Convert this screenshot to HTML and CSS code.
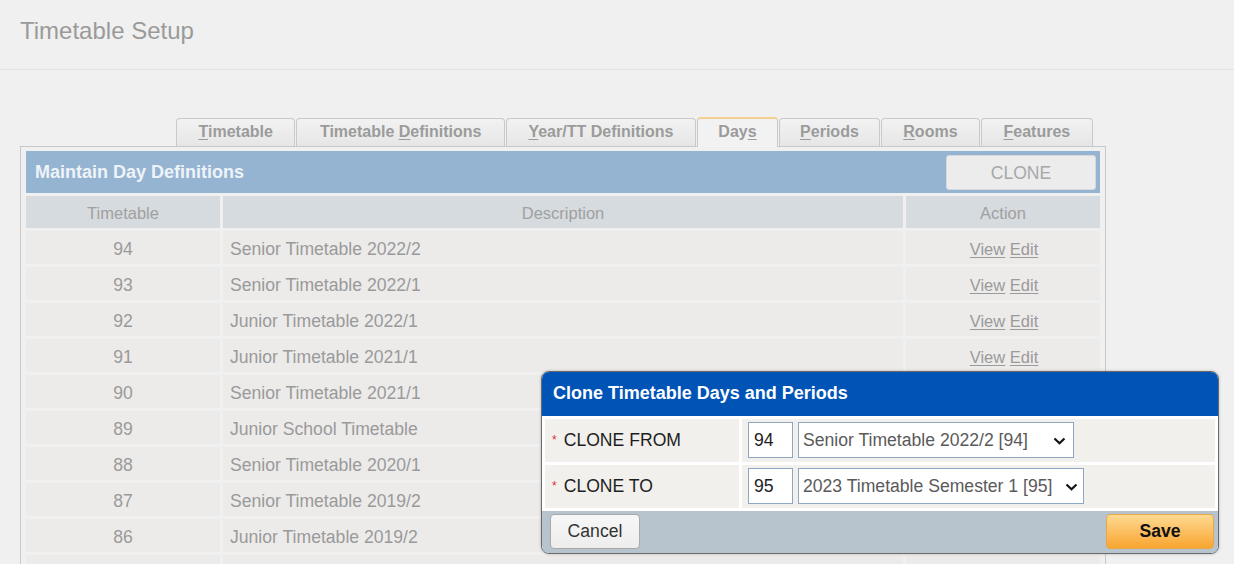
FILE: index.html
```html
<!DOCTYPE html>
<html>
<head>
<meta charset="utf-8">
<title>Timetable Setup</title>
<link rel="stylesheet" href="styles.css">
</head>
<body>
<header class="page-header">
  <h1 class="page-title">Timetable Setup</h1>
</header>
<main class="content">
  <nav class="tabs">
    <div class="tab"><u>T</u>imetable</div>
    <div class="tab tab-wide">Timetable <u>D</u>efinitions</div>
    <div class="tab"><u>Y</u>ear/TT Definitions</div>
    <div class="tab tab-active">Day<u>s</u></div>
    <div class="tab tab-narrow"><u>P</u>eriods</div>
    <div class="tab"><u>R</u>ooms</div>
    <div class="tab"><u>F</u>eatures</div>
  </nav>
  <section class="panel">
    <div class="panel-head">
      <span class="panel-title">Maintain Day Definitions</span>
      <button class="btn-clone">CLONE</button>
    </div>
    <table class="grid">
      <thead>
        <tr><th class="c-id">Timetable</th><th class="c-desc">Description</th><th class="c-act">Action</th></tr>
      </thead>
      <tbody>
        <tr><td class="c-id">94</td><td class="c-desc">Senior Timetable 2022/2</td><td class="c-act"><a>View</a> <a>Edit</a></td></tr>
        <tr><td class="c-id">93</td><td class="c-desc">Senior Timetable 2022/1</td><td class="c-act"><a>View</a> <a>Edit</a></td></tr>
        <tr><td class="c-id">92</td><td class="c-desc">Junior Timetable 2022/1</td><td class="c-act"><a>View</a> <a>Edit</a></td></tr>
        <tr><td class="c-id">91</td><td class="c-desc">Junior Timetable 2021/1</td><td class="c-act"><a>View</a> <a>Edit</a></td></tr>
        <tr><td class="c-id">90</td><td class="c-desc">Senior Timetable 2021/1</td><td class="c-act"><a>View</a> <a>Edit</a></td></tr>
        <tr><td class="c-id">89</td><td class="c-desc">Junior School Timetable</td><td class="c-act"><a>View</a> <a>Edit</a></td></tr>
        <tr><td class="c-id">88</td><td class="c-desc">Senior Timetable 2020/1</td><td class="c-act"><a>View</a> <a>Edit</a></td></tr>
        <tr><td class="c-id">87</td><td class="c-desc">Senior Timetable 2019/2</td><td class="c-act"><a>View</a> <a>Edit</a></td></tr>
        <tr><td class="c-id">86</td><td class="c-desc">Junior Timetable 2019/2</td><td class="c-act"><a>View</a> <a>Edit</a></td></tr>
        <tr><td class="c-id">85</td><td class="c-desc">Senior Timetable 2019/1</td><td class="c-act"><a>View</a> <a>Edit</a></td></tr>
      </tbody>
    </table>
  </section>
</main>

<div class="modal">
  <div class="modal-head">Clone Timetable Days and Periods</div>
  <div class="modal-body">
    <div class="m-row">
      <div class="m-label"><span class="req">*</span><span>CLONE FROM</span></div>
      <div class="m-value">
        <div class="num-input">94</div>
        <div class="fake-select sel-from"><span>Senior Timetable 2022/2 [94]</span>
          <svg class="chev" width="13" height="8" viewBox="0 0 13 8"><path d="M1.5 1.5 L6.5 6.2 L11.5 1.5" fill="none" stroke="#111" stroke-width="2.2"/></svg>
        </div>
      </div>
    </div>
    <div class="m-row">
      <div class="m-label"><span class="req">*</span><span>CLONE TO</span></div>
      <div class="m-value">
        <div class="num-input">95</div>
        <div class="fake-select sel-to"><span>2023 Timetable Semester 1 [95]</span>
          <svg class="chev" width="13" height="8" viewBox="0 0 13 8"><path d="M1.5 1.5 L6.5 6.2 L11.5 1.5" fill="none" stroke="#111" stroke-width="2.2"/></svg>
        </div>
      </div>
    </div>
  </div>
  <div class="modal-foot">
    <button class="btn-cancel">Cancel</button>
    <button class="btn-save">Save</button>
  </div>
</div>
</body>
</html>
```

FILE: styles.css
```css
* { box-sizing: border-box; }

html, body {
  margin: 0;
  padding: 0;
}

body {
  background: #f0f0f0;
  font-family: "Liberation Sans", Arial, sans-serif;
  color: #999;
  width: 1234px;
  height: 564px;
  overflow: hidden;
  position: relative;
}

.page-header {
  height: 70px;
  border-bottom: 1px solid #e3e3e3;
  padding: 16px 0 0 20px;
}

.page-title {
  margin: 0;
  font-size: 24px;
  font-weight: normal;
  color: #9a9a9a;
  line-height: 30px;
}

.content {
  padding: 48px 0 0 20px;
}

.tabs {
  display: flex;
  gap: 1px;
  margin-left: 156px;
  height: 29px;
  position: relative;
  z-index: 1;
}

.tab {
  height: 28px;
  padding: 0 21.5px;
  border: 1px solid #c9c9c9;
  border-bottom: none;
  border-radius: 4px 4px 0 0;
  background: linear-gradient(#f2f2f2, #e6e6e6);
  font-size: 16px;
  font-weight: bold;
  color: #9b9b9b;
  line-height: 25px;
  white-space: nowrap;
}

.tab-wide { padding: 0 22.5px; }
.tab-narrow { padding: 0 20px; }

.tab u {
  text-decoration-thickness: 1px;
  text-underline-offset: 2px;
}

.tab-active {
  height: 30px;
  margin-top: -1px;
  padding: 0 20.5px;
  border-top: 2px solid #f3cf93;
  background: #f2f2f2;
  line-height: 26px;
}

.panel {
  width: 1086px;
  margin-top: -1px;
  border: 1px solid #c8c8c8;
  padding: 4px 5px 0;
  height: 420px;
}

.panel-head {
  height: 42px;
  background: #95b4d2;
  display: flex;
  align-items: center;
  justify-content: space-between;
  padding: 1px 4px 0 9px;
}

.panel-title {
  color: #eef3f8;
  font-size: 18px;
  font-weight: bold;
}

.btn-clone {
  width: 150px;
  height: 35px;
  border: 1px solid #d6d9dc;
  border-radius: 3px;
  background: #ececec;
  color: #a8a8a8;
  font-family: "Liberation Sans", Arial, sans-serif;
  font-size: 17.6px;
  padding: 1px 0 0;
}

.grid {
  border-collapse: separate;
  border-spacing: 3px;
  width: calc(100% + 6px);
  margin: 0 -3px;
  table-layout: fixed;
}

.grid th {
  height: 32px;
  background: #d6dbdf;
  font-weight: normal;
  font-size: 16.5px;
  color: #a0a0a0;
  padding: 2px 0 0;
}

.grid td {
  height: 33px;
  background: #ecebea;
  font-size: 17.6px;
  color: #9a9a9a;
  padding: 3px 0 0;
}

.c-id { width: 194px; text-align: center; }
.c-act { width: 194px; text-align: center; }
.grid td.c-desc { padding-left: 7px; }
.grid th.c-desc { text-align: center; }

.grid td.c-act { font-size: 16.5px; padding-left: 2px; }
.grid td.c-act a {
  color: #9a9a9a;
  text-decoration: underline;
  text-underline-offset: 2px;
}

/* modal dialog */
.modal {
  position: absolute;
  left: 541px;
  top: 371px;
  width: 678px;
  height: 183px;
  background: #fff;
  border: 1px solid #6a6a6a;
  border-radius: 8px;
  overflow: hidden;
  box-shadow: 0 0 3px rgba(0,0,0,0.25);
  color: #222;
}

.modal-head {
  height: 44px;
  background: #0054b6;
  color: #fff;
  font-size: 18px;
  font-weight: bold;
  padding: 0 0 0 11px;
  line-height: 43px;
}

.modal-body {
  display: flex;
  flex-direction: column;
  gap: 3.5px;
  padding: 3px 3px 3px;
}

.m-row {
  display: flex;
  gap: 3px;
  height: 42.5px;
}

.m-label {
  width: 194px;
  background: #f1f0ed;
  font-size: 17.6px;
  padding-left: 7px;
  display: flex;
  align-items: center;
  color: #1e1e1e;
}

.req {
  color: #e03030;
  font-size: 12px;
  margin-right: 7px;
  align-self: flex-start;
  margin-top: 14px;
}

.m-value {
  flex: 1;
  background: #f1f0ed;
  display: flex;
  align-items: center;
  padding-left: 6px;
  gap: 5px;
}

.num-input {
  width: 45px;
  height: 36px;
  background: #fff;
  border: 1px solid #8ea8c3;
  font-size: 17.6px;
  color: #222;
  padding-left: 5px;
  line-height: 34px;
}

.fake-select {
  height: 36px;
  background: #fff;
  border: 1px solid #8ea8c3;
  font-size: 17.6px;
  color: #5a5a5a;
  padding-left: 4px;
  display: flex;
  align-items: center;
  justify-content: space-between;
  white-space: nowrap;
}

.sel-from { width: 276px; padding-right: 7px; }
.sel-to { width: 286px; padding-right: 5px; }

.chev { flex: none; margin-top: 1px; }

.modal-foot {
  height: 43px;
  background: #b7c4ce;
  display: flex;
  align-items: center;
  justify-content: space-between;
  padding: 0 4px 1px 8px;
}

.btn-cancel {
  width: 90px;
  height: 35px;
  border: 1px solid #a9a9a9;
  border-radius: 4px;
  background: linear-gradient(#f7f7f7, #ededed);
  font-family: "Liberation Sans", Arial, sans-serif;
  font-size: 17.6px;
  color: #333;
  padding: 0;
}

.btn-save {
  width: 108px;
  height: 35px;
  border: 1px solid #e7a74c;
  border-radius: 4px;
  background: linear-gradient(#ffd991, #f8a531);
  font-family: "Liberation Sans", Arial, sans-serif;
  font-size: 17.6px;
  font-weight: bold;
  color: #111;
  padding: 0;
}
```
